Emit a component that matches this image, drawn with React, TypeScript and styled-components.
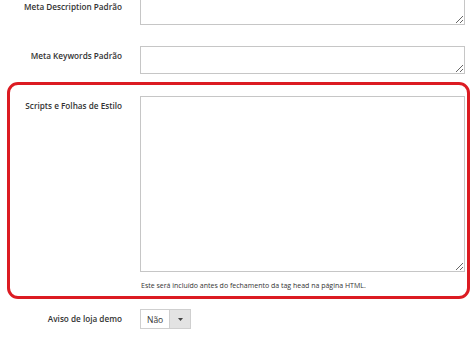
import styled, { createGlobalStyle } from "styled-components";

const GlobalStyle = createGlobalStyle`
  html, body {
    margin: 0;
    padding: 0;
    background: #fff;
    overflow: hidden;
  }

  body {
    font-family: "Open Sans", "Liberation Sans", sans-serif;
    color: #303030;
  }
`;

const App = () => {
  return (
    <>
      <GlobalStyle />
      <Page>
        <Row $top={-3}>
          <Label>Meta Description Padrão</Label>
          <TextArea $height={28} />
        </Row>
        <Row $top={21}>
          <Label>Meta Keywords Padrão</Label>
          <TextArea $height={28} />
        </Row>
        <Highlight>
          <Row $labelWidth={112}>
            <Label>Scripts e Folhas de Estilo</Label>
            <Field>
              <TextArea $height={176} />
              <Hint>
                Este será incluído antes do fechamento da tag head na página
                HTML.
              </Hint>
            </Field>
          </Row>
        </Highlight>
        <Row $top={10} $center>
          <Label $inline>Aviso de loja demo</Label>
          <Select>
            <SelectValue>Não</SelectValue>
            <SelectArrow>
              <svg width="5" height="3" viewBox="0 0 5 3">
                <path d="M0 0h5L2.5 3z" fill="#444" />
              </svg>
            </SelectArrow>
          </Select>
        </Row>
      </Page>
    </>
  );
};

export default App;

const Page = styled.div`
  width: 474px;
  height: 339px;
  overflow: hidden;
`;

const Row = styled.div<{ $top?: number; $labelWidth?: number; $center?: boolean }>`
  display: grid;
  grid-template-columns: ${(p) => p.$labelWidth ?? 122}px 325px;
  column-gap: 18px;
  align-items: ${(p) => (p.$center ? "center" : "start")};
  margin-top: ${(p) => p.$top ?? 0}px;
`;

const Label = styled.label<{ $inline?: boolean }>`
  text-align: right;
  font-size: 8.2px;
  font-weight: 600;
  line-height: 12px;
  color: #333;
  padding-top: ${(p) => (p.$inline ? 0 : 4)}px;
`;

const Field = styled.div`
  display: flex;
  flex-direction: column;
`;

const TextArea = styled.textarea<{ $height: number }>`
  display: block;
  box-sizing: border-box;
  width: 325px;
  height: ${(p) => p.$height}px;
  margin: 0;
  padding: 4px 6px;
  border: 1px solid #c6c6c6;
  border-radius: 0;
  background: #fff;
  font-family: inherit;
  font-size: 9px;
  resize: vertical;
  outline: none;
`;

const Hint = styled.p`
  margin: 8px 0 0 1px;
  font-size: 7px;
  line-height: 12px;
  color: #333;
`;

const Highlight = styled.div`
  margin: 8px 4px 0 7px;
  padding: 11px 2px 4px 0;
  border: 3px solid #dc1b22;
  border-radius: 11px;
`;

const Select = styled.div`
  display: flex;
  width: 51px;
  height: 20px;
  box-sizing: border-box;
  border: 1px solid #cfcfcf;
`;

const SelectValue = styled.span`
  flex: 1;
  display: flex;
  align-items: center;
  padding-left: 6px;
  font-size: 8.5px;
  color: #333;
  background: #fff;
`;

const SelectArrow = styled.span`
  width: 20px;
  display: flex;
  align-items: center;
  justify-content: center;
  background: #e3e3e3;
  border-left: 1px solid #cfcfcf;
`;
